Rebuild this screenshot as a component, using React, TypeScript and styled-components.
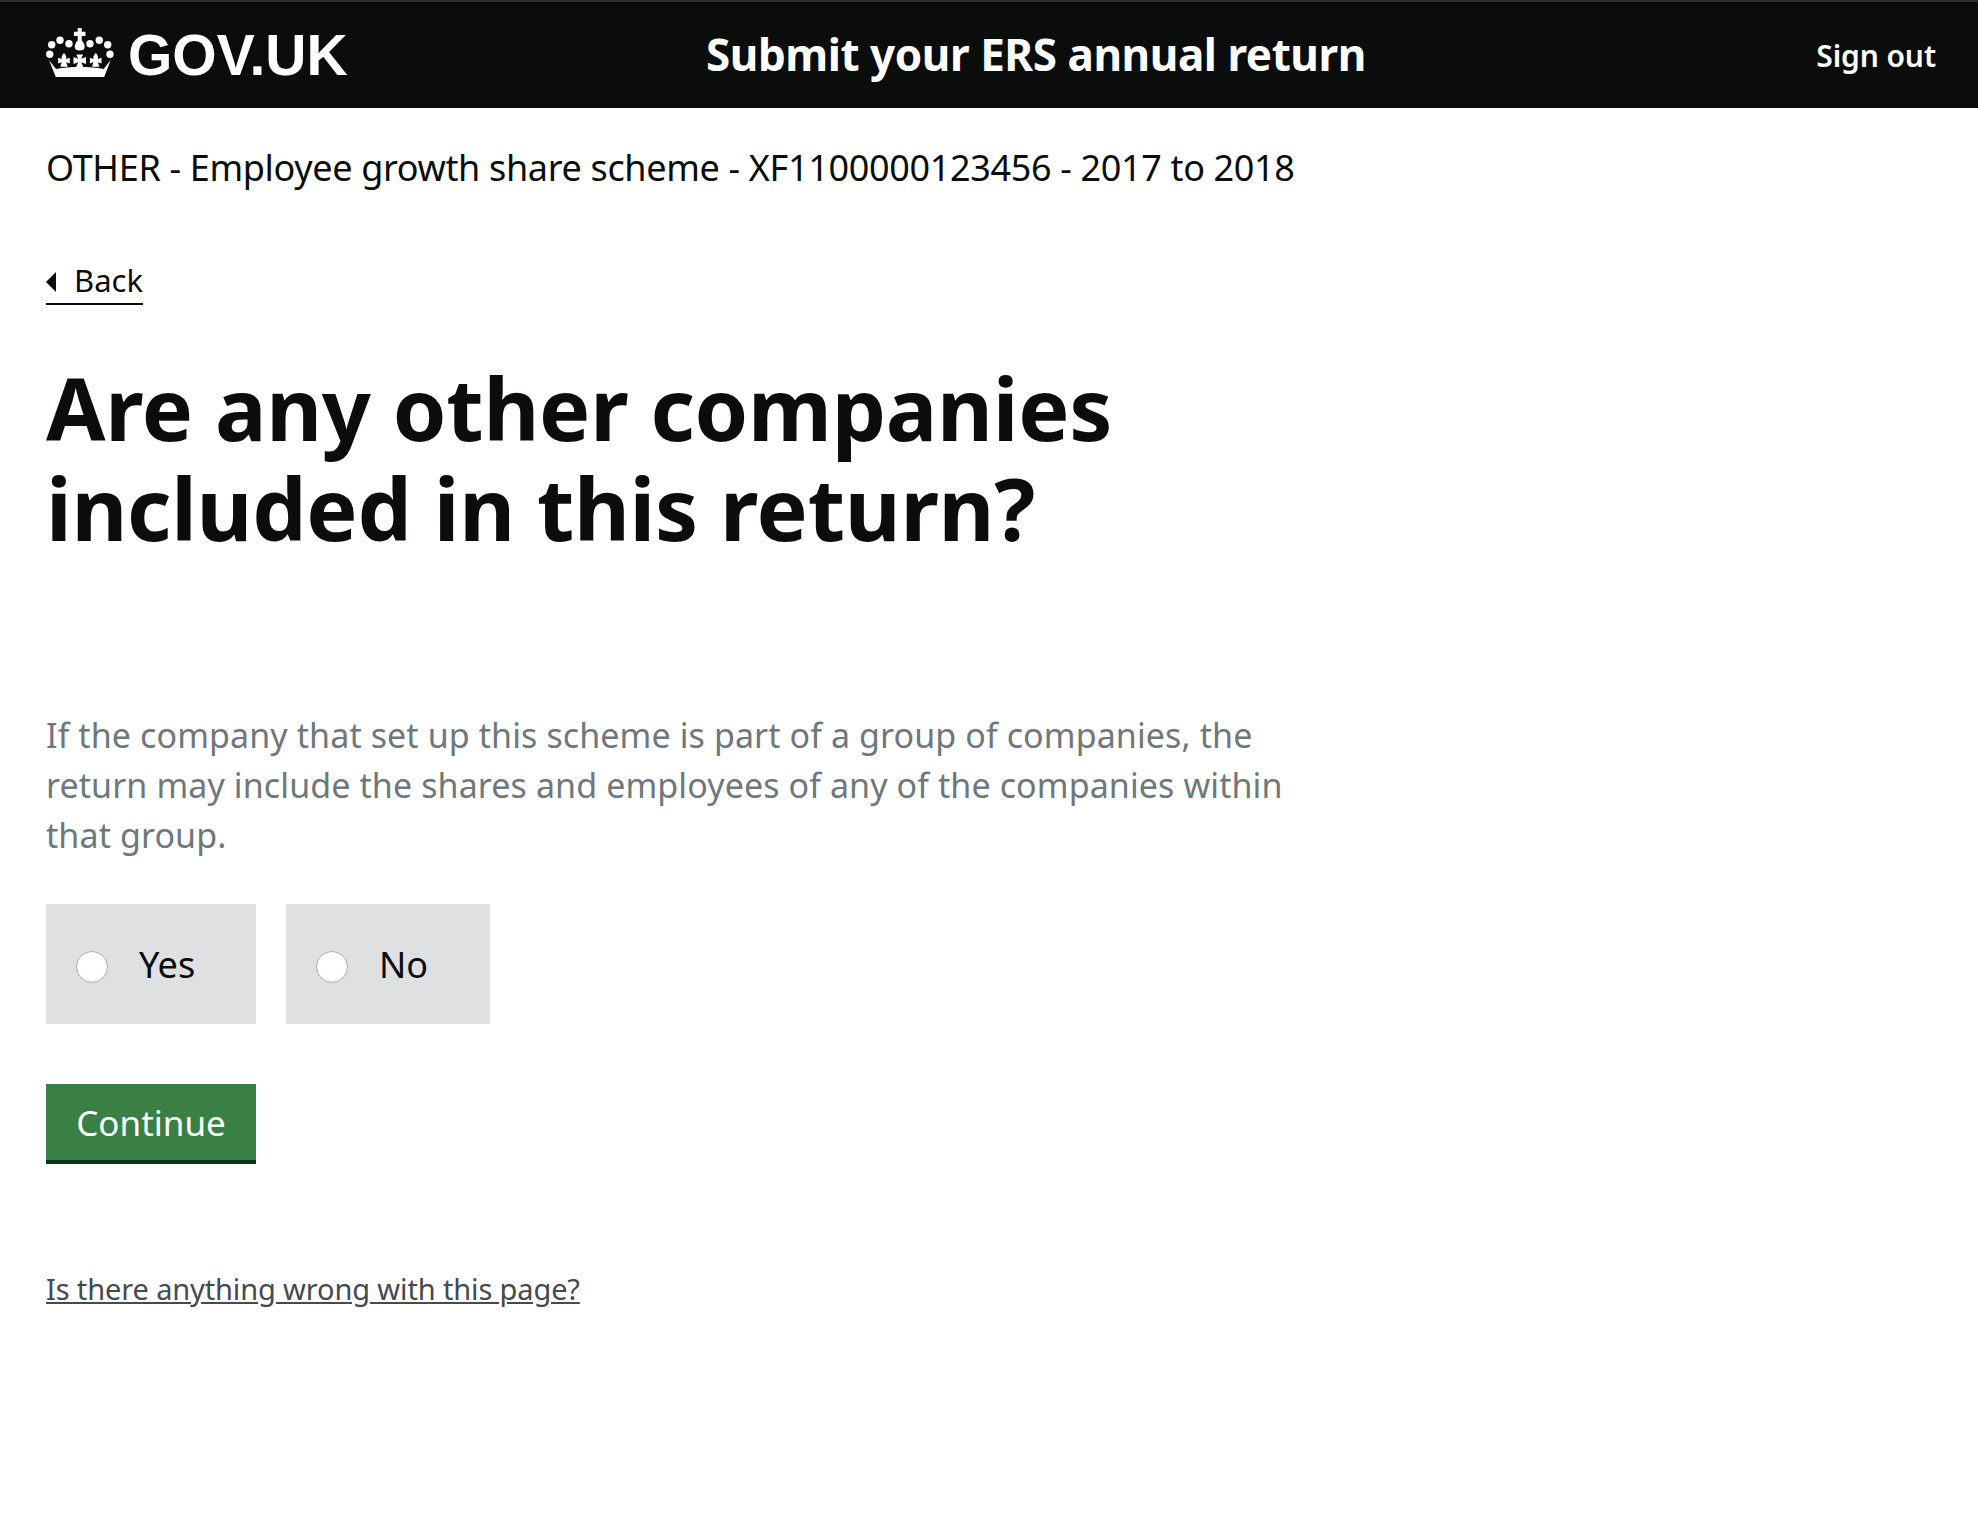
import styled, { createGlobalStyle } from "styled-components";

const GlobalStyle = createGlobalStyle`
  html, body {
    margin: 0;
    padding: 0;
    background: #fff;
    color: #0b0c0c;
    font-family: "Noto Sans", "Open Sans", Arial, sans-serif;
  }
`;

const Header = styled.header`
  box-sizing: border-box;
  height: 108px;
  background: #0b0c0c;
  border-top: 2px solid #2b2c2c;
  padding: 0 42px 0 46px;
  display: grid;
  grid-template-columns: 660px 1fr auto;
  align-items: center;
  color: #fff;
`;

const Logo = styled.a`
  display: flex;
  align-items: center;
  gap: 12px;
  font-family: "Liberation Sans", Arial, sans-serif;
  font-weight: 700;
  font-size: 57px;
  line-height: 1;
`;

const CrownIcon = styled.svg`
  width: 70px;
  height: 52px;
  margin-top: -4px;
`;

const ServiceName = styled.div`
  font-size: 44px;
  font-weight: 700;
  letter-spacing: -0.45px;
  margin-top: -3px;
`;

const SignOut = styled.a`
  font-size: 30px;
  font-weight: 600;
  letter-spacing: -0.1px;
`;

const Main = styled.main`
  padding: 0 46px;
`;

const Phase = styled.p`
  margin: 0;
  padding-top: 36px;
  font-size: 36px;
  line-height: 48px;
  letter-spacing: -0.34px;
`;

const BackLink = styled.a`
  display: inline-flex;
  align-items: center;
  gap: 18px;
  margin-top: 65px;
  height: 46px;
  font-size: 31px;
  border-bottom: 2px solid #0b0c0c;

  &::before {
    content: "";
    margin-top: 3px;
    border-style: solid;
    border-width: 10px 10px 10px 0;
    border-color: transparent #0b0c0c transparent transparent;
  }
`;

const Title = styled.h1`
  margin: 53px 0 0;
  width: 1240px;
  font-size: 86px;
  line-height: 100px;
  font-weight: 700;
  letter-spacing: -0.25px;
`;

const Hint = styled.p`
  margin: 152px 0 0;
  width: 1260px;
  color: #6f777b;
  font-size: 34px;
  line-height: 50px;
  letter-spacing: 0.1px;
`;

const Options = styled.div`
  display: flex;
  gap: 30px;
  margin-top: 44px;
`;

const Option = styled.label<{ $width: number }>`
  box-sizing: border-box;
  width: ${(p) => p.$width}px;
  height: 120px;
  padding-left: 30px;
  display: flex;
  align-items: center;
  gap: 31px;
  background: #dee0e2;
  font-size: 36px;
`;

const Radio = styled.span`
  box-sizing: border-box;
  width: 32px;
  height: 32px;
  margin-top: 5px;
  border-radius: 50%;
  background: #fff;
  border: 1px solid #b0b0b0;
  box-shadow: inset 0 -1px 2px rgba(0, 0, 0, 0.12);
`;

const ContinueButton = styled.button`
  box-sizing: border-box;
  display: block;
  width: 210px;
  height: 80px;
  margin-top: 60px;
  padding: 0;
  border: 0;
  border-bottom: 4px solid #13341a;
  background: #3a8045;
  color: #fff;
  font-family: inherit;
  font-size: 35px;
`;

const ReportLink = styled.a`
  display: inline-block;
  margin-top: 105px;
  color: #454a4c;
  font-size: 29px;
  letter-spacing: -0.13px;
  text-decoration: underline;
`;

const fleur =
  "M25 31c2 2 2.800 3.800 2.200 6l3.600-1.200v5.600l-3.600-1.200 1.500 4.500h-7.400l1.500-4.500-3.600 1.200v-5.600l3.600 1.200c-.6-2.200.2-4 2.200-6z";

const Crown = () => (
  <CrownIcon viewBox="7 5 70 52" fill="#fff" aria-hidden="true">
    <path d="M38.700 6h4v3.800h3.800V14h-3.800v4.500c2 2 3 4.500 3 6.500 0 2.500-2 3.500-5 3.500s-5-1-5-3.500c0-2 1-4.500 3-6.500V14h-3.800V9.800h3.800z" />
    <circle cx="12.700" cy="22.700" r="3.700" />
    <circle cx="21" cy="18.300" r="3.700" />
    <circle cx="30" cy="21.700" r="3.700" />
    <circle cx="51" cy="21.700" r="3.700" />
    <circle cx="60.300" cy="18.300" r="3.700" />
    <circle cx="68.700" cy="22.700" r="3.700" />
    <circle cx="10.700" cy="32.300" r="3.700" />
    <circle cx="71" cy="32.300" r="3.700" />
    <path d="M37.300 32.500h6.800l-1.900 4.300 4.700-1.900v7.200l-4.700-1.900 2.400 5.500h-7.800l2.400-5.500-4.700 1.900v-7.200l4.700 1.900z" />
    <path d={fleur} />
    <path d={fleur} transform="translate(31.700 0)" />
    <path d="M10 38l7 9c7-1.500 15-2 23.700-2s17 .5 24 2l7-9-6.500 17H16.800z" />
  </CrownIcon>
);

export default function App() {
  return (
    <>
      <GlobalStyle />
      <Header>
        <Logo>
          <Crown />
          GOV.UK
        </Logo>
        <ServiceName>Submit your ERS annual return</ServiceName>
        <SignOut>Sign out</SignOut>
      </Header>
      <Main>
        <Phase>OTHER - Employee growth share scheme - XF1100000123456 - 2017 to 2018</Phase>
        <BackLink>Back</BackLink>
        <Title>Are any other companies included in this return?</Title>
        <Hint>
          If the company that set up this scheme is part of a group of companies, the return may
          include the shares and employees of any of the companies within that group.
        </Hint>
        <Options>
          <Option $width={210}>
            <Radio />
            Yes
          </Option>
          <Option $width={204}>
            <Radio />
            No
          </Option>
        </Options>
        <ContinueButton>Continue</ContinueButton>
        <ReportLink>Is there anything wrong with this page?</ReportLink>
      </Main>
    </>
  );
}
